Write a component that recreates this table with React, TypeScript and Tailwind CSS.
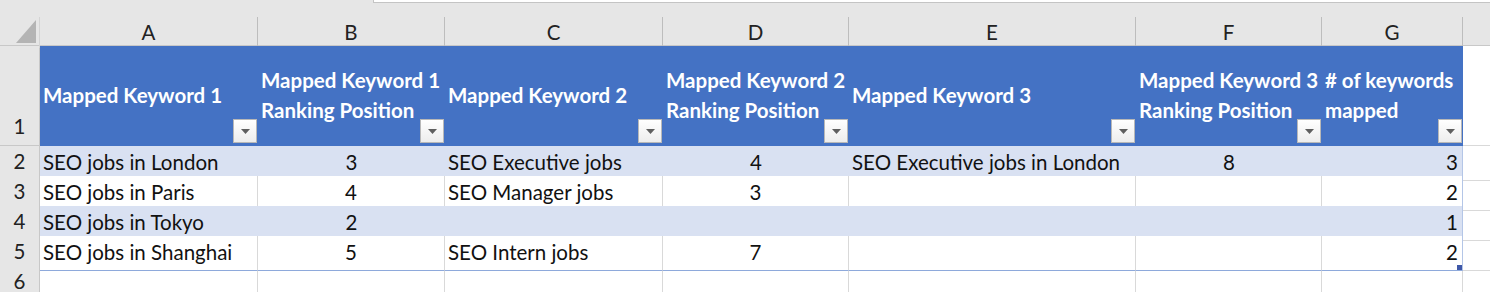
import React from "react";

const headers: string[][] = [
  ["Mapped Keyword 1"],
  ["Mapped Keyword 1", "Ranking Position"],
  ["Mapped Keyword 2"],
  ["Mapped Keyword 2", "Ranking Position"],
  ["Mapped Keyword 3"],
  ["Mapped Keyword 3", "Ranking Position"],
  ["# of keywords", "mapped"],
];

const letters = ["A", "B", "C", "D", "E", "F", "G"];

const rows: string[][] = [
  ["SEO jobs in London", "3", "SEO Executive jobs", "4", "SEO Executive jobs in London", "8", "3"],
  ["SEO jobs in Paris", "4", "SEO Manager jobs", "3", "", "", "2"],
  ["SEO jobs in Tokyo", "2", "", "", "", "", "1"],
  ["SEO jobs in Shanghai", "5", "SEO Intern jobs", "7", "", "", "2"],
];

// text alignment per column
const align = [
  "justify-start pl-[3px]",
  "justify-center",
  "justify-start pl-[3px]",
  "justify-center",
  "justify-start pl-[3px]",
  "justify-center",
  "justify-end pr-[4px]",
];

const gridCols = "grid grid-cols-[40px_218px_187px_218px_186px_287px_186px_141px_1fr]";

function FilterButton() {
  return (
    <div className="absolute right-[1px] bottom-[3px] w-6 h-6 flex items-center justify-center border border-[#b8b8b8] bg-gradient-to-b from-white to-[#ededed]">
      <svg width="9" height="5" viewBox="0 0 9 5">
        <path d="M0 0 L9 0 L4.5 5 Z" fill="#5f5f5f" />
      </svg>
    </div>
  );
}

export default function App() {
  return (
    <div className="w-[1490px] h-[292px] overflow-hidden bg-white text-[20.5px] text-[#111] font-['Lato','Liberation_Sans',sans-serif]">
      {/* formula bar edge */}
      <div className="flex h-[17px] bg-[#e6e6e6]">
        <div className="w-[373px]" />
        <div className="flex-1 h-[3px] bg-white border-l border-b border-[#c4c4c4]" />
      </div>

      {/* Column letters */}
      <div className={`${gridCols} h-[29px] bg-[#e6e6e6] border-b border-[#c8c8c8] text-[#222]`}>
        <div className="relative border-r border-[#d4d4d4]">
          <svg className="absolute left-0 top-0" width="40" height="28" viewBox="0 0 40 28">
            <path d="M36 3 L36 26 L16 26 Z" fill="#b4b4b4" />
          </svg>
        </div>
        {letters.map(l => (
          <div key={l} className="flex items-end justify-center border-r border-[#bdbdbd]">
            {l}
          </div>
        ))}
        <div />
      </div>

      {/* Row 1: table header */}
      <div className={`${gridCols} h-[100px]`}>
        <div className="flex items-end justify-center pb-[3px] bg-[#e6e6e6] border-r border-b border-[#c8c8c8] text-[#222]">
          1
        </div>
        {headers.map((h, i) => (
          <div
            key={i}
            className="relative flex flex-col justify-center pl-[3px] pb-[2px] bg-[#4472c4] text-white font-bold leading-[30px] whitespace-nowrap"
          >
            {h.map(line => (
              <span key={line}>{line}</span>
            ))}
            <FilterButton />
          </div>
        ))}
        <div className="border-b border-[#d9d9d9]" />
      </div>

      {/* Data rows */}
      {rows.map((r, ri) => {
        const band = ri % 2 === 0;
        return (
          <div key={ri} className={`${gridCols} h-[30px]`}>
            <div className="flex items-end justify-center pb-[3px] bg-[#e6e6e6] border-r border-b border-[#c8c8c8] text-[#222]">
              {ri + 2}
            </div>
            {r.map((v, ci) => (
              <div
                key={ci}
                className={`relative flex items-center pb-[1px] whitespace-nowrap border-b border-[#8ea9db] ${align[ci]} ${
                  band ? "bg-[#d9e1f2]" : "bg-white"
                } ${ci === 6 ? "border-r border-r-[#b4c6e7]" : band ? "" : "border-r border-r-[#d9d9d9]"}`}
              >
                {v}
                {ri === rows.length - 1 && ci === 6 && (
                  <div className="absolute right-0 bottom-0 w-[5px] h-[5px] bg-[#3f58a8]" />
                )}
              </div>
            ))}
            <div className="border-b border-[#d9d9d9]" />
          </div>
        );
      })}

      {/* Row 6 */}
      <div className={`${gridCols} h-[30px]`}>
        <div className="flex items-end justify-center pb-[3px] bg-[#e6e6e6] border-r border-b border-[#c8c8c8] text-[#222]">
          6
        </div>
        {letters.map(l => (
          <div key={l} className="border-r border-[#d9d9d9]" />
        ))}
        <div />
      </div>
    </div>
  );
}
